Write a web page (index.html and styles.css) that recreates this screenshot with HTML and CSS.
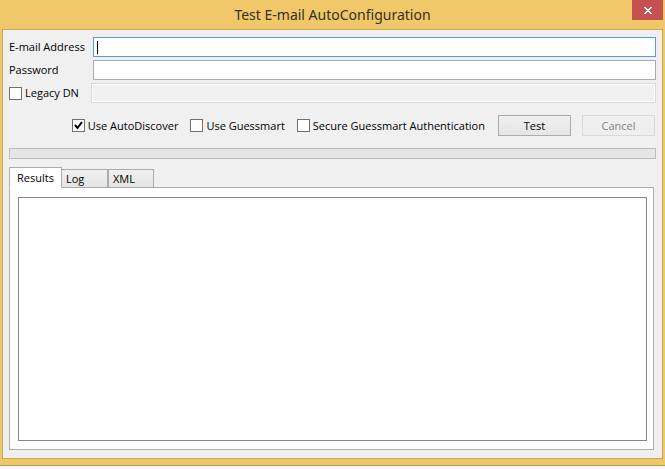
FILE: index.html
```html
<!DOCTYPE html>
<html lang="en">
<head>
    <meta charset="UTF-8">
    <meta name="viewport" content="width=device-width, initial-scale=1.0">
    <title>Test E-mail AutoConfiguration</title>
    <link rel="stylesheet" href="styles.css">
</head>
<body>
    <div class="window">
        <!-- Title Bar -->
        <header class="title-bar">
            <h1>Test E-mail AutoConfiguration</h1>
            <button type="button" class="close-btn" aria-label="Close">
                <svg width="8" height="7" viewBox="0 0 8 7" shape-rendering="crispEdges">
                    <path fill="#fff" d="M0 0h2v1h1v1h2v-1h1v-1h2v1h-1v1h-1v1h-1v1h1v1h1v1h1v1h-2v-1h-1v-1h-2v1h-1v1h-2v-1h1v-1h1v-1h1v-1h-1v-1h-1v-1h-1z"/>
                </svg>
            </button>
        </header>

        <main class="content">
            <form class="settings">
                <div class="field">
                    <label for="email">E-mail Address</label>
                    <input type="text" id="email" class="text-box active" autocomplete="off">
                </div>
                <div class="field">
                    <label for="password">Password</label>
                    <input type="password" id="password" class="text-box">
                </div>
                <div class="field legacy">
                    <label class="check"><input type="checkbox" id="legacy"> Legacy DN</label>
                    <input type="text" class="text-box" aria-label="Legacy DN" disabled>
                </div>

                <div class="actions">
                    <div class="options">
                        <label class="check"><input type="checkbox" checked> Use AutoDiscover</label>
                        <label class="check"><input type="checkbox"> Use Guessmart</label>
                        <label class="check"><input type="checkbox"> Secure Guessmart Authentication</label>
                    </div>
                    <div class="buttons">
                        <button type="button" class="btn">Test</button>
                        <button type="button" class="btn" disabled>Cancel</button>
                    </div>
                </div>
            </form>

            <div class="progress" role="progressbar" aria-label="Test progress" aria-valuenow="0"></div>

            <!-- Tabs -->
            <div class="tabs" role="tablist">
                <button type="button" class="tab selected" role="tab" aria-selected="true">Results</button>
                <button type="button" class="tab" role="tab">Log</button>
                <button type="button" class="tab" role="tab">XML</button>
            </div>
            <div class="panel" role="tabpanel">
                <textarea class="results" aria-label="Results" readonly></textarea>
            </div>
        </main>
    </div>
</body>
</html>
```

FILE: styles.css
```css
* {
    box-sizing: border-box;
}

body {
    margin: 0;
    padding-bottom: 3px;
    min-height: 100vh;
    display: flex;
    flex-direction: column;
    background: #f8f8f8;
    color: #000;
    font-family: "Open Sans", "Noto Sans", sans-serif;
    font-size: 11px;
    line-height: 16px;
}

button,
input,
textarea {
    margin: 0;
    font: inherit;
    color: inherit;
    border-radius: 0;
    outline: none;
}

.window {
    flex: 1;
    display: flex;
    flex-direction: column;
    padding: 0 2px 6px;
    background: #f0c869;
    border-bottom: 1px solid #b99a51;
}

.title-bar {
    display: grid;
    grid-template-columns: 31px 1fr 31px;
    height: 29px;
}

.title-bar h1 {
    grid-column: 2;
    margin: 0;
    text-align: center;
    font-family: "Noto Sans", sans-serif;
    font-size: 14px;
    font-weight: normal;
    line-height: 30px;
    color: #35301f;
}

.close-btn {
    display: flex;
    align-items: center;
    justify-content: center;
    height: 20px;
    padding: 0;
    border: none;
    background: #c75050;
}

.content {
    flex: 1;
    display: flex;
    flex-direction: column;
    padding: 7px 6px 8px;
    border: 1px solid #c9a857;
    background: #f0f0f0;
}

.settings {
    display: flex;
    flex-direction: column;
    gap: 3px;
}

.field {
    display: grid;
    grid-template-columns: 84px 1fr;
    align-items: center;
}

.field.legacy {
    grid-template-columns: 82px 1fr;
}

.text-box {
    width: 100%;
    height: 20px;
    padding: 0 3px;
    border: 1px solid #ababab;
    background: #fff;
}

/* focused box with the text cursor */
.text-box.active {
    border-color: #569de5;
    background: #fff linear-gradient(#000, #000) 3px 3px / 1px 13px no-repeat;
    caret-color: transparent;
}

.text-box:disabled {
    border-color: #d9d9d9;
    background: #f0f0f0;
    box-shadow: inset 0 0 0 1px #fff;
}

.check {
    display: flex;
    align-items: center;
    gap: 3px;
    white-space: nowrap;
}

.check input {
    appearance: none;
    width: 13px;
    height: 13px;
    border: 1px solid #707070;
    background: #fff;
}

.check input:checked {
    background: #fff url("data:image/svg+xml,%3Csvg xmlns='http://www.w3.org/2000/svg' viewBox='0 0 11 11'%3E%3Cpath d='M2 5l2.500 3L9 2' fill='none' stroke='%23000' stroke-width='2'/%3E%3C/svg%3E") center / 11px 11px no-repeat;
}

.actions {
    display: flex;
    align-items: center;
    justify-content: flex-end;
    gap: 13px;
    margin-top: 9px;
    padding-right: 1px;
}

.options {
    display: flex;
    gap: 12px;
}

.buttons {
    display: flex;
    gap: 11px;
}

.btn {
    width: 73px;
    height: 21px;
    padding: 0;
    line-height: 19px;
    border: 1px solid #acacac;
    background: linear-gradient(#f0f0f0, #e5e5e5);
}

.btn:disabled {
    border-color: #d9d9d9;
    background: #efefef;
    color: #838383;
}

.progress {
    height: 11px;
    margin-top: 12px;
    border: 1px solid #bcbcbc;
    background: #e6e6e6;
}

.tabs {
    position: relative;
    display: flex;
    align-items: flex-end;
    margin-top: 8px;
}

.tab {
    width: 46px;
    height: 19px;
    padding: 0 4px;
    text-align: left;
    line-height: 18px;
    border: 1px solid #acacac;
    background: linear-gradient(#f0f0f0, #e5e5e5);
}

.tab.selected {
    width: 53px;
    height: 21px;
    padding: 0 7px;
    border-bottom-color: #fff;
    background: #fff;
}

.tab.selected + .tab {
    border-left: none;
}

.panel {
    flex: 1;
    display: flex;
    margin: -1px 2px 0 0;
    padding: 9px 6px 8px 8px;
    border: 1px solid #acacac;
    background: #fff;
}

.results {
    flex: 1;
    min-height: 80px;
    resize: none;
    border: 1px solid #828790;
    background: #fff;
}
```
